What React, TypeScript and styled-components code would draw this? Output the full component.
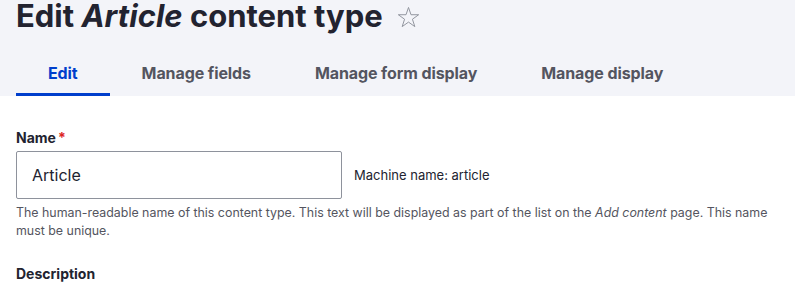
import styled, { createGlobalStyle } from 'styled-components'

const Global = createGlobalStyle`
  html, body {
    margin: 0;
    padding: 0;
    background: #fff;
  }
  body {
    font-family: Inter, 'Noto Sans', sans-serif;
    color: #222330;
  }
`

const Header = styled.header`
  background: #f3f4f9;
  padding: 0 16px;
`

const TitleRow = styled.div`
  display: flex;
  align-items: center;
  height: 32px;
`

const Title = styled.h1`
  margin: 0;
  font-size: 31px;
  font-weight: 700;
  letter-spacing: 0;
  line-height: 32px;
  color: #222330;

  em {
    font-style: italic;
  }
`

const Star = styled.svg`
  width: 23px;
  height: 23px;
  margin-left: 14px;
  margin-top: 3px;
`

const Tabs = styled.nav`
  display: flex;
  margin-top: 18px;
`

const Tab = styled.a<{ $active?: boolean }>`
  display: block;
  padding: 4px 32px 0;
  height: 46px;
  line-height: 39px;
  font-size: 16px;
  font-weight: 700;
  letter-spacing: -0.1px;
  color: ${p => (p.$active ? '#003ecc' : '#545560')};
  border-bottom: 3px solid ${p => (p.$active ? '#003ecc' : 'transparent')};
  box-sizing: border-box;
`

const Main = styled.main`
  padding: 33px 16px 0;
`

const Label = styled.label`
  display: block;
  font-size: 14px;
  font-weight: 700;
  line-height: 18px;
  color: #222330;
  margin-bottom: 4px;
`

const Required = styled.span`
  color: #dc2323;
  margin-left: 2px;
`

const FieldRow = styled.div`
  display: flex;
  align-items: center;
`

const Input = styled.div<{ $wide?: boolean }>`
  box-sizing: border-box;
  width: ${p => (p.$wide ? '763px' : '326px')};
  height: 48px;
  border: 1px solid #8e929c;
  border-radius: 2px;
  padding: 0 15px;
  display: flex;
  align-items: center;
  font-size: 16px;
  color: #222330;
  background: #fff;
`

const Machine = styled.span`
  margin-left: 12px;
  font-size: 13px;
  color: #222330;
`

const Help = styled.p`
  margin: 5px 0 0;
  font-size: 12.4px;
  line-height: 18px;
  color: #545560;
  max-width: 765px;
`

const Field = styled.div`
  & + & {
    margin-top: 25px;
  }
`

export default function App() {
  return (
    <>
      <Global />
      <Header>
        <TitleRow>
          <Title>
            Edit <em>Article</em> content type
          </Title>
          <Star viewBox="0 0 24 24" fill="none" stroke="#8e929c" strokeWidth="1" strokeLinejoin="miter">
            <path d="M12 1.5l2.6 7.6h8l-6.5 4.7 2.5 7.7L12 16.8l-6.6 4.7 2.5-7.7-6.5-4.7h8z" />
          </Star>
        </TitleRow>
        <Tabs>
          <Tab $active>Edit</Tab>
          <Tab>Manage fields</Tab>
          <Tab>Manage form display</Tab>
          <Tab>Manage display</Tab>
        </Tabs>
      </Header>
      <Main>
        <Field>
          <Label>
            Name<Required>*</Required>
          </Label>
          <FieldRow>
            <Input>Article</Input>
            <Machine>Machine name: article</Machine>
          </FieldRow>
          <Help>
            The human-readable name of this content type. This text will be displayed as part of the list on the{' '}
            <em>Add content</em> page. This name must be unique.
          </Help>
        </Field>
        <Field>
          <Label>Description</Label>
          <Input $wide />
        </Field>
      </Main>
    </>
  )
}
